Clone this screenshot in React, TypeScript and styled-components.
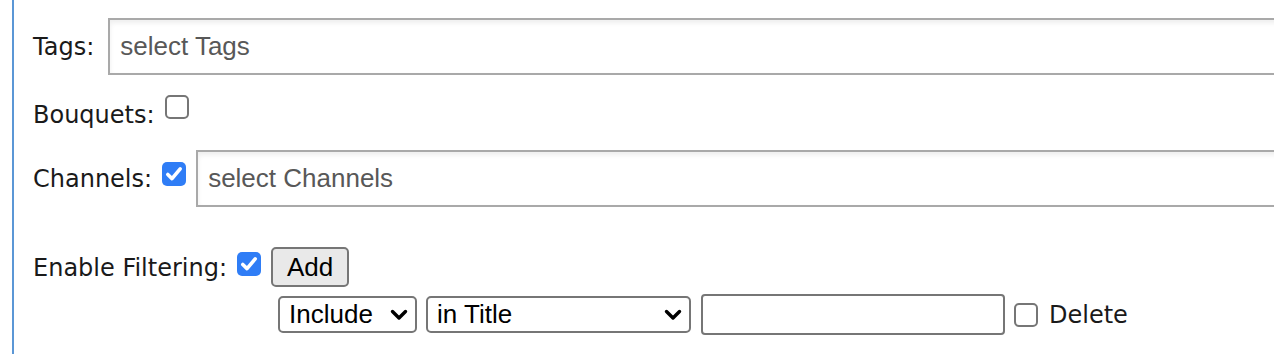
import React from 'react';
import styled, { createGlobalStyle } from 'styled-components';

const GlobalStyle = createGlobalStyle`
  html, body {
    margin: 0;
    padding: 0;
    background: #fff;
    overflow: hidden;
  }
  body {
    font-family: "DejaVu Sans", Verdana, sans-serif;
    color: #1a1a1a;
  }
`;

const Panel = styled.div`
  margin-left: 12px;
  border-left: 2px solid #5b97d6;
  padding-left: 19px;
  min-height: 100vh;
  box-sizing: border-box;
  display: flex;
  flex-direction: column;
  overflow: hidden;
`;

const Row = styled.div<{ $top: number; $indent?: number; $center?: boolean; $gap?: number }>`
  display: flex;
  align-items: ${p => (p.$center ? 'center' : 'flex-start')};
  gap: ${p => p.$gap ?? 10}px;
  margin-top: ${p => p.$top}px;
  margin-left: ${p => p.$indent || 0}px;
`;

const Label = styled.span<{ $offset?: number; $space?: number }>`
  font-size: 24px;
  line-height: 28px;
  white-space: nowrap;
  margin-top: ${p => p.$offset || 0}px;
  margin-right: ${p => p.$space || 0}px;
`;

const TextField = styled.input`
  flex: 1;
  height: 57px;
  box-sizing: border-box;
  margin-right: -60px;
  border: 2px solid #a9a9a9;
  box-shadow: inset 0 3px 5px rgba(0, 0, 0, 0.07);
  padding: 0 10px;
  font-family: "Liberation Sans", Arial, sans-serif;
  font-size: 26px;
  color: #333;
  outline: none;
  &::placeholder {
    color: #585858;
  }
`;

const Box = styled.span<{ $checked: boolean; $offset?: number }>`
  display: inline-flex;
  align-items: center;
  justify-content: center;
  flex: none;
  width: 24px;
  height: 24px;
  box-sizing: border-box;
  margin-top: ${p => p.$offset || 0}px;
  border-radius: 5px;
  border: ${p => (p.$checked ? 'none' : '2px solid #767676')};
  background: ${p => (p.$checked ? '#2f7df6' : '#fff')};
`;

const Checkbox = ({ checked, offset }: { checked: boolean; offset?: number }) => (
  <Box $checked={checked} $offset={offset}>
    {checked && (
      <svg width="20" height="20" viewBox="0 0 20 20">
        <polyline
          points="3.8,10.5 8,14.6 16.2,4.8"
          fill="none"
          stroke="#fff"
          strokeWidth="3.6"
          strokeLinecap="round"
          strokeLinejoin="round"
        />
      </svg>
    )}
  </Box>
);

const Button = styled.button`
  width: 78px;
  height: 40px;
  box-sizing: border-box;
  border: 2px solid #767676;
  border-radius: 5px;
  background: #e9e9e9;
  font-family: "Liberation Sans", Arial, sans-serif;
  font-size: 26px;
  color: #000;
  padding: 0;
`;

const SelectBox = styled.div<{ $width: number }>`
  width: ${p => p.$width}px;
  height: 37px;
  box-sizing: border-box;
  border: 2px solid #767676;
  border-radius: 5px;
  display: flex;
  align-items: center;
  justify-content: space-between;
  padding: 0 7px 0 9px;
  font-family: "Liberation Sans", Arial, sans-serif;
  font-size: 26px;
  color: #000;
  background: #fff;
`;

const Chevron = () => (
  <svg width="18" height="12" viewBox="0 0 18 12">
    <polyline
      points="2.5,2.5 9,9 15.5,2.5"
      fill="none"
      stroke="#000"
      strokeWidth="3.4"
      strokeLinecap="round"
      strokeLinejoin="round"
    />
  </svg>
);

const Select = ({ value, width }: { value: string; width: number }) => (
  <SelectBox $width={width}>
    <span>{value}</span>
    <Chevron />
  </SelectBox>
);

const TermInput = styled.input`
  width: 304px;
  height: 41px;
  box-sizing: border-box;
  border: 2px solid #767676;
  border-radius: 4px;
  font-family: "Liberation Sans", Arial, sans-serif;
  font-size: 26px;
  outline: none;
  margin-left: 1px;
`;

const DeleteLabel = styled.span`
  font-size: 24px;
  margin-left: 2px;
`;

export default function App() {
  return (
    <>
      <GlobalStyle />
      <Panel>
        <Row $top={18} $center>
          <Label $space={4}>Tags:</Label>
          <TextField placeholder="select Tags" />
        </Row>
        <Row $top={20}>
          <Label $offset={6}>Bouquets:</Label>
          <Checkbox checked={false} />
        </Row>
        <Row $top={21}>
          <Label $offset={15}>Channels:</Label>
          <Checkbox checked offset={12} />
          <TextField placeholder="select Channels" />
        </Row>
        <Row $top={40}>
          <Label $offset={7}>Enable Filtering:</Label>
          <Checkbox checked offset={5} />
          <Button>Add</Button>
        </Row>
        <Row $top={7} $indent={245} $center $gap={9}>
          <Select value="Include" width={139} />
          <Select value="in Title" width={265} />
          <TermInput />
          <Checkbox checked={false} />
          <DeleteLabel>Delete</DeleteLabel>
        </Row>
      </Panel>
    </>
  );
}
